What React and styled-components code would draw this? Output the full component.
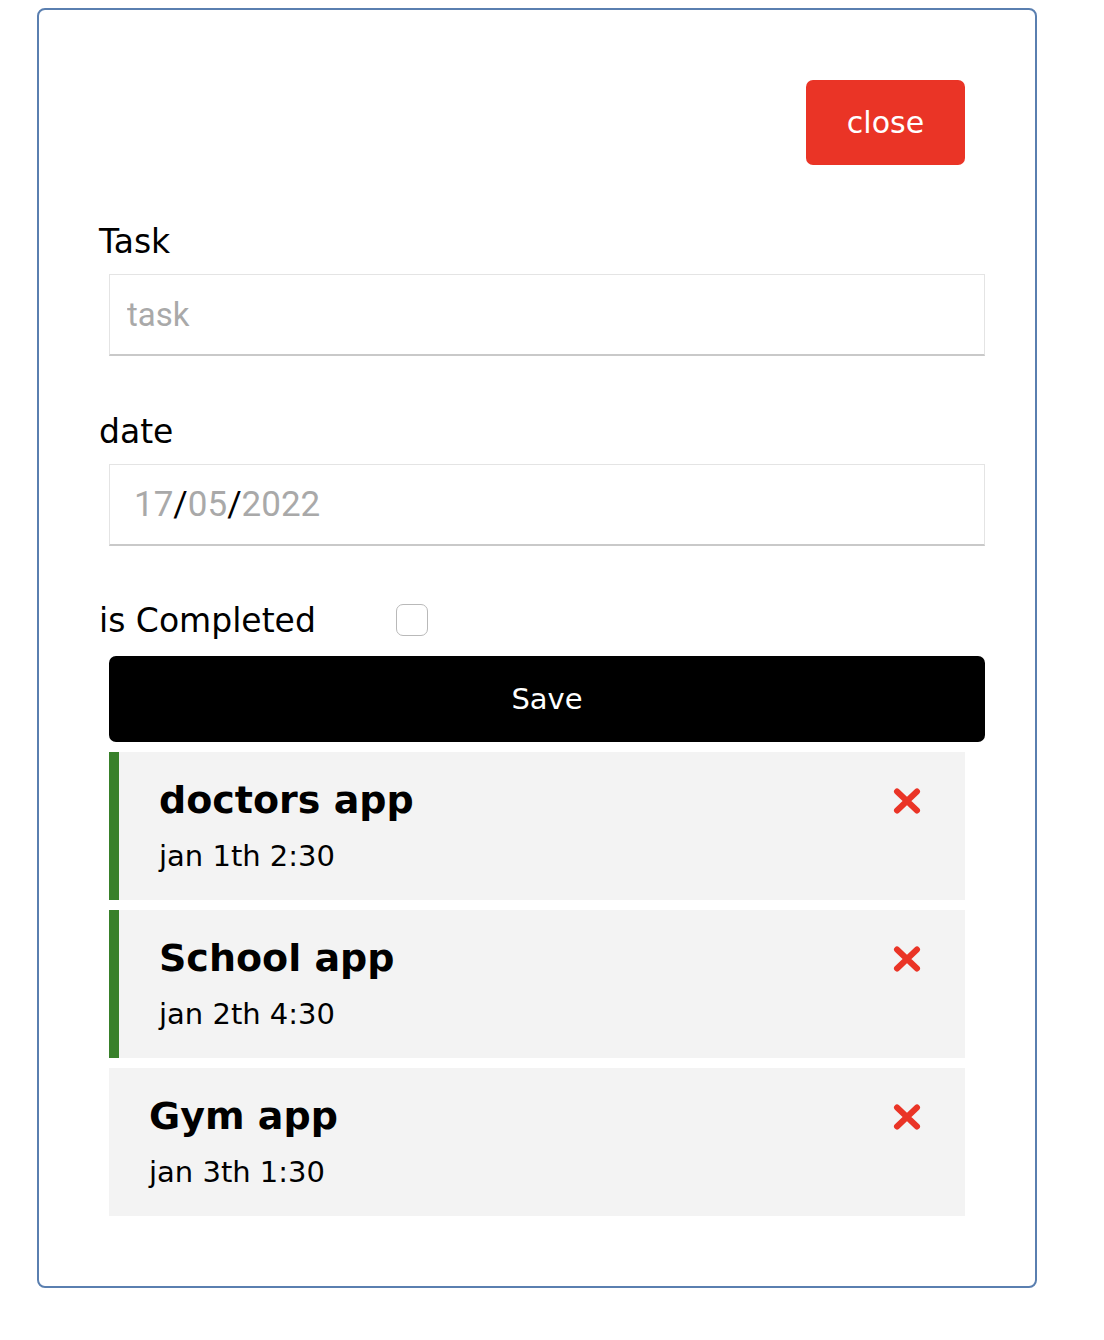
import React, { useState } from "react";
import styled, { createGlobalStyle } from "styled-components";

const GlobalStyle = createGlobalStyle`
  body {
    margin: 0;
    background: #fff;
    font-family: "DejaVu Sans", "Noto Sans", sans-serif;
    color: #000;
  }
`;

const Card = styled.div`
  box-sizing: border-box;
  width: 1000px;
  margin: 8px 0 0 37px;
  border: 2px solid #5a7fb0;
  border-radius: 8px;
  padding: 70px 70px 70px 60px;
  display: flex;
  flex-direction: column;
`;

const TopBar = styled.div`
  display: flex;
  justify-content: flex-end;
`;

const CloseButton = styled.button`
  width: 159px;
  height: 85px;
  border: none;
  border-radius: 7px;
  background: #ea3426;
  color: #fff;
  font-family: "DejaVu Sans", sans-serif;
  font-size: 30px;
  cursor: pointer;
`;

const Label = styled.label`
  display: block;
  font-size: 33px;
  line-height: 40px;
  margin-top: ${(p) => p.$top}px;
`;

const Field = styled.div`
  box-sizing: border-box;
  width: 876px;
  height: 82px;
  margin: 12px 0 0 10px;
  background: #fff;
  border: 1px solid #e4e4e4;
  border-bottom: 2px solid #c9c9c9;
  display: flex;
  align-items: center;
`;

const TextInput = styled.input`
  width: 100%;
  border: none;
  outline: none;
  background: transparent;
  padding: 0 17px;
  font-family: Roboto, "Liberation Sans", sans-serif;
  font-size: 33px;
  color: #333;
  &::placeholder {
    color: #a9a9a9;
  }
`;

const DateText = styled.div`
  padding-left: 24px;
  font-family: Roboto, "Liberation Sans", sans-serif;
  font-size: 35px;
  color: #a9a9a9;
  span {
    color: #000;
  }
`;

const CheckRow = styled.div`
  display: flex;
  align-items: center;
  height: 40px;
  margin-top: 54px;
  font-size: 33px;
`;

const Check = styled.input`
  appearance: none;
  box-sizing: border-box;
  width: 32px;
  height: 32px;
  margin: 0 0 0 80px;
  border: 1px solid #b9b9b9;
  border-radius: 7px;
  background: #fff;
  &:checked {
    background: #38802a;
  }
`;

const SaveButton = styled.button`
  width: 876px;
  height: 86px;
  margin: 16px 0 0 10px;
  border: none;
  border-radius: 7px;
  background: #000;
  color: #fff;
  font-family: "DejaVu Sans", sans-serif;
  font-size: 29px;
  cursor: pointer;
`;

const List = styled.div`
  display: flex;
  flex-direction: column;
  gap: 10px;
  margin: 10px 0 0 10px;
`;

const Item = styled.div`
  box-sizing: border-box;
  height: 148px;
  background: #f3f3f3;
  border-left: ${(p) => (p.$done ? "10px solid #38802a" : "none")};
  padding: 26px 44px 26px 40px;
  display: flex;
  justify-content: space-between;
  align-items: flex-start;
`;

const ItemText = styled.div`
  display: flex;
  flex-direction: column;
  gap: 16px;
`;

const ItemTitle = styled.div`
  font-size: 38px;
  font-weight: 700;
  line-height: 44px;
`;

const ItemTime = styled.div`
  font-size: 29px;
  line-height: 36px;
`;

const DeleteButton = styled.button`
  border: none;
  background: none;
  padding: 0;
  margin-top: 10px;
  width: 28px;
  height: 26px;
  cursor: pointer;
  display: flex;
`;

const XIcon = () => (
  <svg width="28" height="26" viewBox="0 0 28 26">
    <path
      d="M4 3.5 L24 22.5 M24 3.5 L4 22.5"
      stroke="#ea3426"
      strokeWidth="6"
      strokeLinecap="round"
      fill="none"
    />
  </svg>
);

const initialTasks = [
  { id: 1, text: "doctors app", day: "jan 1th 2:30", done: true },
  { id: 2, text: "School app", day: "jan 2th 4:30", done: true },
  { id: 3, text: "Gym app", day: "jan 3th 1:30", done: false },
];

const App = () => {
  const [tasks, setTasks] = useState(initialTasks);
  const [task, setTask] = useState("");
  const [completed, setCompleted] = useState(false);

  return (
    <>
      <GlobalStyle />
      <Card>
        <TopBar>
          <CloseButton>close</CloseButton>
        </TopBar>

        <Label $top={57}>Task</Label>
        <Field>
          <TextInput
            placeholder="task"
            value={task}
            onChange={(e) => setTask(e.target.value)}
          />
        </Field>

        <Label $top={56}>date</Label>
        <Field>
          <DateText>
            17<span>/</span>05<span>/</span>2022
          </DateText>
        </Field>

        <CheckRow>
          is Completed
          <Check
            type="checkbox"
            checked={completed}
            onChange={(e) => setCompleted(e.target.checked)}
          />
        </CheckRow>

        <SaveButton>Save</SaveButton>

        <List>
          {tasks.map((t) => (
            <Item key={t.id} $done={t.done}>
              <ItemText>
                <ItemTitle>{t.text}</ItemTitle>
                <ItemTime>{t.day}</ItemTime>
              </ItemText>
              <DeleteButton
                onClick={() => setTasks(tasks.filter((x) => x.id !== t.id))}
              >
                <XIcon />
              </DeleteButton>
            </Item>
          ))}
        </List>
      </Card>
    </>
  );
};

export default App;
